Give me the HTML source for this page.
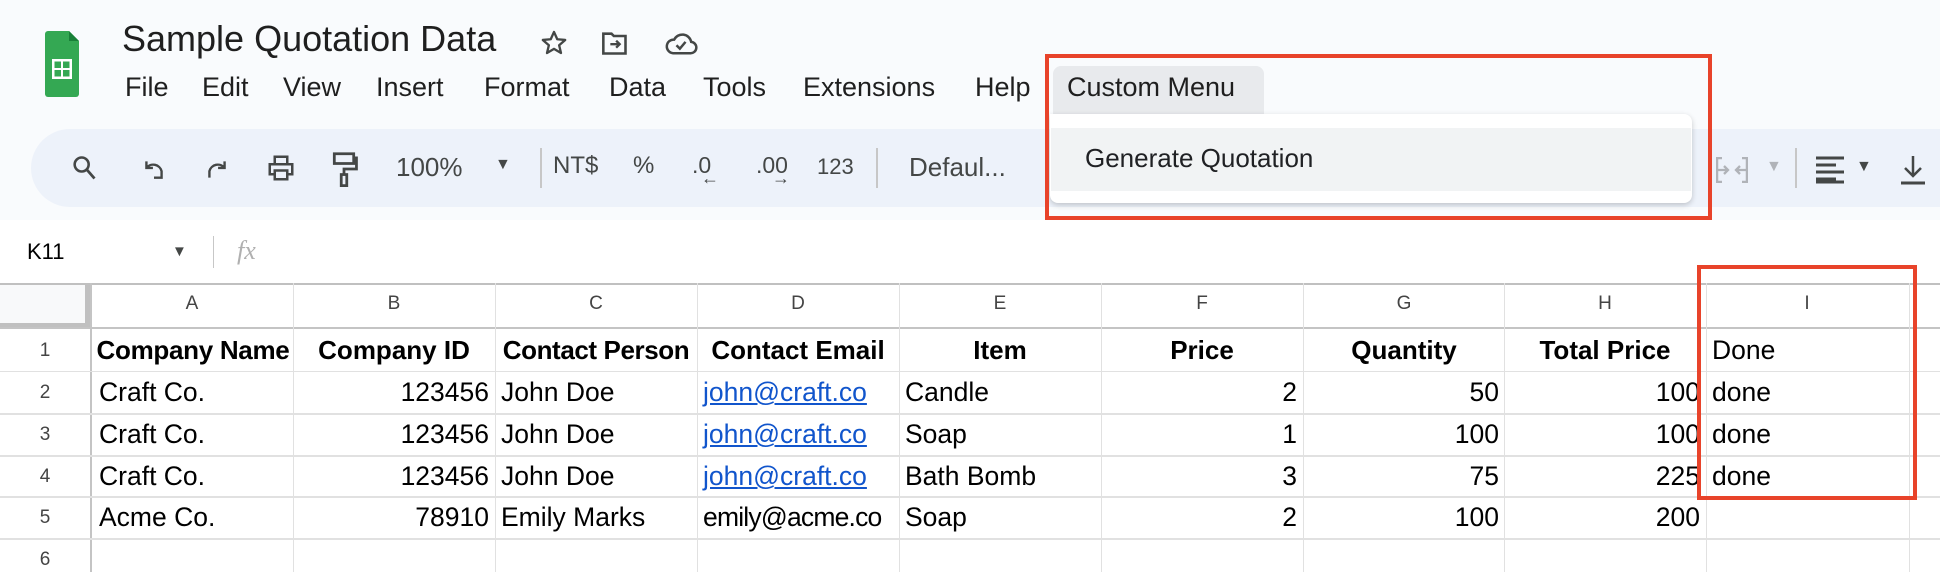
<!DOCTYPE html>
<html><head><meta charset="utf-8"><style>
*{margin:0;padding:0;box-sizing:border-box}
body{width:1940px;height:572px;overflow:hidden;background:#f9fbfd;font-family:"Liberation Sans",Arial,sans-serif;position:relative;color:#1f1f1f}
.a{position:absolute;white-space:nowrap}
.menu{font-size:27px;top:72px}
.tb{font-size:26px;color:#444746;top:152px}
.grid{position:absolute;left:0;top:283px;width:1940px;height:289px;background:#fff}
.vl{position:absolute;top:0;width:1px;height:289px;background:#e1e1e1}
.hl{position:absolute;left:0;width:1940px;height:1px;background:#e1e1e1}
.ch{position:absolute;top:10px;font-size:19px;color:#444;text-align:center;width:202px}
.rn{position:absolute;left:0;width:90px;text-align:center;font-size:19px;color:#444}
.c{position:absolute;font-size:26.5px;color:#000;height:42px;line-height:42px;overflow:visible;white-space:nowrap}
.b{font-weight:bold;text-align:center;width:202px;font-size:26px}
.r{text-align:right;width:196px}
.l{padding-left:6px}
.lnk{color:#1155cc;text-decoration:underline}
</style></head><body>
<svg class="a" style="left:45px;top:31px" width="34" height="66" viewBox="0 0 34 66"><path d="M3 0h21l10 10v53a3 3 0 0 1-3 3H3a3 3 0 0 1-3-3V3a3 3 0 0 1 3-3z" fill="#34a853"/><path d="M24 0l10 10H24z" fill="#188038"/><rect x="7" y="28" width="20" height="20" fill="#fff"/><rect x="9.5" y="30.5" width="6.5" height="6.5" fill="#34a853"/><rect x="18" y="30.5" width="6.5" height="6.5" fill="#34a853"/><rect x="9.5" y="39" width="6.5" height="6.5" fill="#34a853"/><rect x="18" y="39" width="6.5" height="6.5" fill="#34a853"/></svg>
<div class="a" style="left:122px;top:18px;font-size:36px">Sample Quotation Data</div>
<svg class="a" style="left:540px;top:29px" width="28" height="28" viewBox="0 0 24 24"><path d="M12 2.5l2.8 6.3 6.8.6-5.2 4.5 1.6 6.7L12 17l-6 3.6 1.6-6.7L2.4 9.4l6.8-.6z" fill="none" stroke="#444746" stroke-width="2" stroke-linejoin="round"/></svg>
<svg class="a" style="left:601px;top:30px" width="28" height="26" viewBox="0 0 24 22"><path d="M2 3h7l2 2h10v15H2z" fill="none" stroke="#444746" stroke-width="2.2"/><path d="M8 12h8M13 9l3 3-3 3" fill="none" stroke="#444746" stroke-width="2"/></svg>
<svg class="a" style="left:664px;top:30px" width="34" height="26" viewBox="0 0 30 22"><path d="M8 20h15a5 5 0 0 0 1-10 8 8 0 0 0-15-2A6 6 0 0 0 8 20z" fill="none" stroke="#444746" stroke-width="2.2"/><path d="M11 13l3 3 5-6" fill="none" stroke="#444746" stroke-width="2.2"/></svg>
<div class="a menu" style="left:125px">File</div>
<div class="a menu" style="left:202px">Edit</div>
<div class="a menu" style="left:283px">View</div>
<div class="a menu" style="left:376px">Insert</div>
<div class="a menu" style="left:484px">Format</div>
<div class="a menu" style="left:609px">Data</div>
<div class="a menu" style="left:703px">Tools</div>
<div class="a menu" style="left:803px">Extensions</div>
<div class="a menu" style="left:975px">Help</div>
<div class="a" style="left:1053px;top:66px;width:211px;height:48px;background:#e8eaed;border-radius:8px 8px 0 0"></div>
<div class="a menu" style="left:1067px">Custom Menu</div>
<div class="a" style="left:31px;top:129px;width:1960px;height:78px;background:#edf2fa;border-radius:39px"></div>
<svg class="a" style="left:70px;top:154px" width="28" height="28" viewBox="0 0 24 24"><circle cx="10" cy="9" r="6" fill="none" stroke="#444746" stroke-width="2.2"/><path d="M14.5 13.5L21 21" stroke="#444746" stroke-width="2.4"/></svg>
<svg class="a" style="left:141px;top:156px" width="26" height="26" viewBox="0 0 24 24"><path d="M5 5v6h6M5 11a8 8 0 0 1 14 3v6h-7" fill="none" stroke="#444746" stroke-width="2.2"/></svg>
<svg class="a" style="left:204px;top:156px" width="26" height="26" viewBox="0 0 24 24"><path d="M19 5v6h-6M19 11a8 8 0 0 0-14 3v6" fill="none" stroke="#444746" stroke-width="2.2"/></svg>
<svg class="a" style="left:266px;top:153px" width="30" height="30" viewBox="0 0 24 24"><path d="M7 8V3h10v5M7 17H3V9h18v8h-4M7 14h10v7H7z" fill="none" stroke="#444746" stroke-width="2"/></svg>
<svg class="a" style="left:330px;top:151px" width="28" height="36" viewBox="0 0 20 26"><path d="M3 2h14v7H3zM17 5h2v8H10v4" fill="none" stroke="#444746" stroke-width="2"/><rect x="8" y="17" width="4" height="8" fill="none" stroke="#444746" stroke-width="2"/></svg>
<div class="a tb" style="left:396px">100%</div>
<div class="a" style="left:495px;top:156px;font-size:16px;color:#444746">▼</div>
<div class="a" style="left:540px;top:148px;width:2px;height:40px;background:#c7c7c7"></div>
<div class="a tb" style="left:553px;font-size:24px">NT$</div>
<div class="a tb" style="left:633px;font-size:24px">%</div>
<div class="a tb" style="left:692px;font-size:23px">.0</div>
<div class="a" style="left:701px;top:168px;font-size:18px;color:#444746">←</div>
<div class="a tb" style="left:756px;font-size:23px">.00</div>
<div class="a" style="left:772px;top:168px;font-size:18px;color:#444746">→</div>
<div class="a tb" style="left:817px;font-size:22px;top:154px">123</div>
<div class="a" style="left:876px;top:148px;width:2px;height:40px;background:#c7c7c7"></div>
<div class="a tb" style="left:909px">Defaul...</div>
<svg class="a" style="left:1716px;top:157px" width="32" height="26" viewBox="0 0 32 26"><path d="M6 1H1v24h5M26 1h5v24h-5" fill="none" stroke="#b0b3b8" stroke-width="2.5"/><path d="M2 13h10M8 9l4 4-4 4M30 13H20M24 9l-4 4 4 4" fill="none" stroke="#b0b3b8" stroke-width="2.3"/></svg>
<div class="a" style="left:1766px;top:158px;font-size:16px;color:#b0b3b8">▼</div>
<div class="a" style="left:1795px;top:148px;width:2px;height:40px;background:#c7c7c7"></div>
<svg class="a" style="left:1816px;top:155px" width="30" height="30" viewBox="0 0 30 30"><path d="M0 3h28M0 10h20M0 17h28M0 24h20" stroke="#444746" stroke-width="3"/><path d="M0 27h28" stroke="#444746" stroke-width="3"/></svg>
<div class="a" style="left:1856px;top:158px;font-size:16px;color:#444746">▼</div>
<svg class="a" style="left:1900px;top:154px" width="26" height="32" viewBox="0 0 26 32"><path d="M13 2v20M5 14l8 8 8-8" fill="none" stroke="#444746" stroke-width="2.5"/><path d="M1 29h24" stroke="#444746" stroke-width="3"/></svg>
<div class="a" style="left:1050px;top:114px;width:642px;height:89px;background:#fff;border-radius:0 8px 8px 8px;box-shadow:0 2px 6px rgba(0,0,0,.2)"></div>
<div class="a" style="left:1051px;top:128px;width:640px;height:63px;background:#f1f3f4"></div>
<div class="a" style="left:1085px;top:143px;font-size:26px;color:#202124">Generate Quotation</div>
<div class="a" style="left:0;top:220px;width:1940px;height:63px;background:#fff"></div>
<div class="a" style="left:27px;top:239px;font-size:22px;color:#000">K11</div>
<div class="a" style="left:172px;top:243px;font-size:15px;color:#444746">▼</div>
<div class="a" style="left:213px;top:236px;width:1px;height:32px;background:#c7c7c7"></div>
<div class="a" style="left:237px;top:236px;font-size:26px;color:#b0b0b0;font-style:italic;font-family:'Liberation Serif',serif">fx</div>
<div class="grid">
<div class="a" style="left:0;top:0;width:90px;height:45px;background:#f8f9fa;border-right:5px solid #c0c0c0;border-bottom:5px solid #c0c0c0"></div>
<div class="hl" style="top:0;height:2px;background:#c0c0c0"></div>
<div class="hl" style="top:44px;height:2px;background:#c4c4c4"></div>
<div class="vl" style="left:90px;background:#c4c4c4;width:2px"></div>
<div class="vl" style="left:293px"></div><div class="vl" style="left:495px"></div><div class="vl" style="left:697px"></div><div class="vl" style="left:899px"></div><div class="vl" style="left:1101px"></div><div class="vl" style="left:1303px"></div><div class="vl" style="left:1504px"></div><div class="vl" style="left:1706px"></div><div class="vl" style="left:1909px"></div>
<div class="hl" style="top:88px"></div><div class="hl" style="top:130px;height:2px"></div><div class="hl" style="top:172px;height:2px"></div><div class="hl" style="top:213px;height:2px"></div><div class="hl" style="top:255px;height:2px"></div>
<div class="ch" style="left:91px">A</div><div class="ch" style="left:293px">B</div><div class="ch" style="left:495px">C</div><div class="ch" style="left:697px">D</div><div class="ch" style="left:899px">E</div><div class="ch" style="left:1101px">F</div><div class="ch" style="left:1303px">G</div><div class="ch" style="left:1504px">H</div><div class="ch" style="left:1706px">I</div>
<div class="rn" style="top:57px">1</div><div class="rn" style="top:99px">2</div><div class="rn" style="top:141px">3</div><div class="rn" style="top:183px">4</div><div class="rn" style="top:224px">5</div><div class="rn" style="top:266px">6</div>
<div class="c b" style="left:92px;top:46px;letter-spacing:-0.3px">Company Name</div>
<div class="c b" style="left:293px;top:46px">Company ID</div>
<div class="c b" style="left:495px;top:46px;letter-spacing:-0.4px">Contact Person</div>
<div class="c b" style="left:697px;top:46px">Contact Email</div>
<div class="c b" style="left:899px;top:46px">Item</div>
<div class="c b" style="left:1101px;top:46px">Price</div>
<div class="c b" style="left:1303px;top:46px">Quantity</div>
<div class="c b" style="left:1504px;top:46px">Total Price</div>
<div class="c l" style="left:1706px;top:46px">Done</div>
<div class="c l" style="left:93px;top:88px">Craft Co.</div><div class="c r" style="left:293px;top:88px">123456</div><div class="c l" style="left:495px;top:88px">John Doe</div><div class="c l lnk" style="left:697px;top:88px">john@craft.co</div><div class="c l" style="left:899px;top:88px">Candle</div><div class="c r" style="left:1101px;top:88px">2</div><div class="c r" style="left:1303px;top:88px">50</div><div class="c r" style="left:1504px;top:88px">100</div><div class="c l" style="left:1706px;top:88px">done</div>
<div class="c l" style="left:93px;top:130px">Craft Co.</div><div class="c r" style="left:293px;top:130px">123456</div><div class="c l" style="left:495px;top:130px">John Doe</div><div class="c l lnk" style="left:697px;top:130px">john@craft.co</div><div class="c l" style="left:899px;top:130px">Soap</div><div class="c r" style="left:1101px;top:130px">1</div><div class="c r" style="left:1303px;top:130px">100</div><div class="c r" style="left:1504px;top:130px">100</div><div class="c l" style="left:1706px;top:130px">done</div>
<div class="c l" style="left:93px;top:172px">Craft Co.</div><div class="c r" style="left:293px;top:172px">123456</div><div class="c l" style="left:495px;top:172px">John Doe</div><div class="c l lnk" style="left:697px;top:172px">john@craft.co</div><div class="c l" style="left:899px;top:172px">Bath Bomb</div><div class="c r" style="left:1101px;top:172px">3</div><div class="c r" style="left:1303px;top:172px">75</div><div class="c r" style="left:1504px;top:172px">225</div><div class="c l" style="left:1706px;top:172px">done</div>
<div class="c l" style="left:93px;top:213px">Acme Co.</div><div class="c r" style="left:293px;top:213px">78910</div><div class="c l" style="left:495px;top:213px">Emily Marks</div><div class="c l" style="left:697px;top:213px;letter-spacing:-0.8px">emily@acme.co</div><div class="c l" style="left:899px;top:213px">Soap</div><div class="c r" style="left:1101px;top:213px">2</div><div class="c r" style="left:1303px;top:213px">100</div><div class="c r" style="left:1504px;top:213px">200</div>
</div>
<div class="a" style="left:1045px;top:54px;width:667px;height:166px;border:4px solid #e8432a"></div>
<div class="a" style="left:1697px;top:265px;width:220px;height:235px;border:4px solid #e8432a"></div>
</body></html>
